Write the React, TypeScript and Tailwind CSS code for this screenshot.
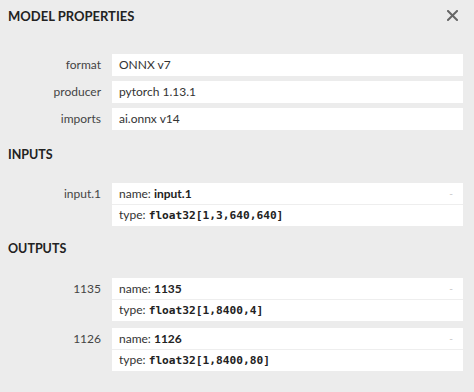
const props = [
  { label: "format", value: "ONNX v7" },
  { label: "producer", value: "pytorch 1.13.1" },
  { label: "imports", value: "ai.onnx v14" },
];

const inputs = [{ label: "input.1", name: "input.1", type: "float32[1,3,640,640]" }];

const outputs = [
  { label: "1135", name: "1135", type: "float32[1,8400,4]" },
  { label: "1126", name: "1126", type: "float32[1,8400,80]" },
];

type Arg = { label: string; name: string; type: string };

const ArgRow = ({ arg }: { arg: Arg }) => (
  <div className="flex">
    <div className="w-[93px] shrink-0 h-[22px] flex items-center justify-end text-[#444]">
      {arg.label}
    </div>
    <div className="ml-[11px] flex-1 bg-white">
      <div className="h-[22px] flex items-center justify-between px-[7px] border-b border-[#eeeeee]">
        <span>
          name: <b className="font-bold text-[#222]">{arg.name}</b>
        </span>
        <span className="text-[#c4c4c4] text-[10px] pr-[3px]">-</span>
      </div>
      <div className="h-[21px] flex items-center px-[7px]">
        <span>
          type:{" "}
          <span className="font-bold text-[11.2px] text-[#222] font-['DejaVu_Sans_Mono',monospace]">
            {arg.type}
          </span>
        </span>
      </div>
    </div>
  </div>
);

export default function App() {
  return (
    <div className="w-[474px] h-[392px] bg-[#ececec] text-[#333] text-[12px] font-['Lato',sans-serif] pl-2 pr-[11px] overflow-hidden">
      {/* HEADER */}
      <div className="h-[34px] flex items-center justify-between">
        <h1 className="font-bold text-[13px] text-[#222]">MODEL PROPERTIES</h1>
        <svg width="11" height="11" viewBox="0 0 11 11" className="mr-[5px] -mt-[3px]">
          <path d="M1 1L10 10M10 1L1 10" stroke="#666" strokeWidth="2" strokeLinecap="square" />
        </svg>
      </div>

      {/* PROPERTIES */}
      <div className="mt-[20px] flex flex-col gap-[5px]">
        {props.map((p) => (
          <div key={p.label} className="flex">
            <div className="w-[93px] shrink-0 h-[22px] flex items-center justify-end text-[#444]">
              {p.label}
            </div>
            <div className="ml-[11px] flex-1 h-[22px] bg-white flex items-center px-[7px]">
              {p.value}
            </div>
          </div>
        ))}
      </div>

      {/* INPUTS */}
      <h2 className="mt-[15px] h-[20px] flex items-center font-bold text-[12.5px] text-[#222]">INPUTS</h2>
      <div className="mt-[18px] flex flex-col gap-[7px]">
        {inputs.map((a) => (
          <ArgRow key={a.label} arg={a} />
        ))}
      </div>

      {/* OUTPUTS */}
      <h2 className="mt-[13px] h-[20px] flex items-center font-bold text-[12.5px] text-[#222]">OUTPUTS</h2>
      <div className="mt-[19px] flex flex-col gap-[7px]">
        {outputs.map((a) => (
          <ArgRow key={a.label} arg={a} />
        ))}
      </div>
    </div>
  );
}
